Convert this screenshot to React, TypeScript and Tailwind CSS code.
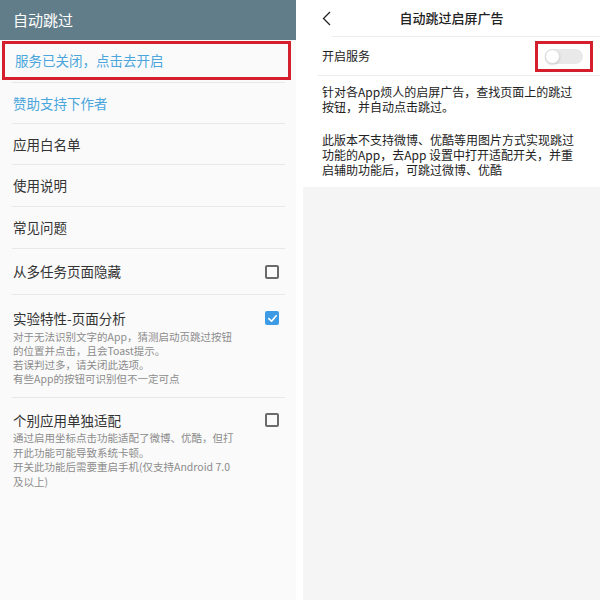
import React from "react";

const font = { fontFamily: '"Noto Sans CJK SC", "Noto Sans", sans-serif' };

function Box({ checked }: { checked?: boolean }) {
  if (checked) {
    return (
      <div className="w-[14px] h-[14px] rounded-[2px] bg-[#3d9be6] flex items-center justify-center">
        <svg width="11" height="11" viewBox="0 0 12 12">
          <polyline points="2,6.2 5,9 10,3" fill="none" stroke="#fff" strokeWidth="1.8" strokeLinecap="round" strokeLinejoin="round" />
        </svg>
      </div>
    );
  }
  return <div className="w-[14px] h-[14px] rounded-[2px] border-2 border-[#6b6b6b]" />;
}

function Divider() {
  return <div className="h-px ml-[12px] w-[273px] bg-[#e8e8e8]" />;
}

function Item({ text, h }: { text: string; h: string }) {
  return (
    <div className={`${h} flex items-center pl-[13px] text-[13.5px] text-[#333]`}>{text}</div>
  );
}

export default function App() {
  return (
    <div className="w-[600px] h-[600px] flex bg-white overflow-hidden" style={font}>
      {/* Left panel */}
      <div className="w-[296px] h-full bg-[#fafafa] flex flex-col">
        <div className="h-[40px] bg-[#617d8a] flex items-center pl-[13px] text-white text-[15px]">自动跳过</div>
        <div className="h-[42px] pt-[1px]">
          <div className="ml-[2px] w-[289px] h-[39px] border-[3px] border-[#d61f2c] flex items-center pl-[10px] text-[13.5px] text-[#4aa6dc]">
            服务已关闭，点击去开启
          </div>
        </div>
        <Divider />
        <div className="h-[40px] flex items-center pl-[13px] text-[13.5px] text-[#4aa6dc]">赞助支持下作者</div>
        <Divider />
        <Item text="应用白名单" h="h-[40px]" />
        <Divider />
        <Item text="使用说明" h="h-[41px]" />
        <Divider />
        <Item text="常见问题" h="h-[41px]" />
        <Divider />
        <div className="h-[45px] flex items-center justify-between pl-[13px] pr-[17px] text-[13.5px] text-[#333]">
          <span>从多任务页面隐藏</span>
          <Box />
        </div>
        <Divider />
        <div className="h-[102px] pt-[13px] pl-[13px] pr-[17px]">
          <div className="h-[20px] flex items-center justify-between text-[13.5px] text-[#333]">
            <span>实验特性-页面分析</span>
            <Box checked />
          </div>
          <div className="mt-[2px] text-[10.5px] leading-[14px] text-[#8c8c8c] whitespace-nowrap">
            <div>对于无法识别文字的App，猜测启动页跳过按钮</div>
            <div>的位置并点击，且会Toast提示。</div>
            <div>若误判过多，请关闭此选项。</div>
            <div>有些App的按钮可识别但不一定可点</div>
          </div>
        </div>
        <Divider />
        <div className="pt-[12px] pl-[13px] pr-[17px]">
          <div className="h-[20px] flex items-center justify-between text-[13.5px] text-[#333]">
            <span>个别应用单独适配</span>
            <Box />
          </div>
          <div className="mt-[1px] text-[10.5px] leading-[14.5px] text-[#8c8c8c] whitespace-nowrap">
            <div>通过启用坐标点击功能适配了微博、优酷，但打</div>
            <div>开此功能可能导致系统卡顿。</div>
            <div>开关此功能后需要重启手机(仅支持Android 7.0</div>
            <div>及以上)</div>
          </div>
        </div>
      </div>

      <div className="w-[7px] h-full bg-white" />

      {/* Right panel */}
      <div className="flex-1 h-full bg-[#f5f5f5] flex flex-col">
        <div className="bg-white">
          <div className="h-[36px] flex items-center">
            <div className="w-[40px] pl-[19px] flex items-center">
              <svg width="9" height="15" viewBox="0 0 9 15">
                <polyline points="8,1 1.5,7.5 8,14" fill="none" stroke="#222" strokeWidth="1.3" />
              </svg>
            </div>
            <div className="flex-1 text-center text-[13px] font-medium text-[#222]">自动跳过启屏广告</div>
            <div className="w-[40px]" />
          </div>
          <div className="h-px ml-[29px] bg-[#ececec]" />
          <div className="h-[38px] flex items-center justify-between pl-[19px] pr-[7px]">
            <span className="text-[12px] text-[#222]">开启服务</span>
            <div className="w-[58px] h-[31px] border-[3px] border-[#d61f2c] flex items-center justify-center">
              <div className="w-[38px] h-[15px] rounded-full bg-[#e9e9e9] relative">
                <div className="absolute left-0 top-0 w-[15px] h-[15px] rounded-full bg-white border border-[#dcdcdc] shadow-[0_1px_2px_rgba(0,0,0,0.15)]" />
              </div>
            </div>
          </div>
          <div className="h-px ml-[15px] bg-[#ececec]" />
          <div className="pt-[8px] pb-[10px] pl-[19px] text-[12px] leading-[15px] text-[#222] whitespace-nowrap">
            <div>针对各App烦人的启屏广告，查找页面上的跳过</div>
            <div>按钮，并自动点击跳过。</div>
            <div className="mt-[18px]">此版本不支持微博、优酷等用图片方式实现跳过</div>
            <div>功能的App，去App 设置中打开适配开关，并重</div>
            <div>启辅助功能后，可跳过微博、优酷</div>
          </div>
        </div>
      </div>
    </div>
  );
}
